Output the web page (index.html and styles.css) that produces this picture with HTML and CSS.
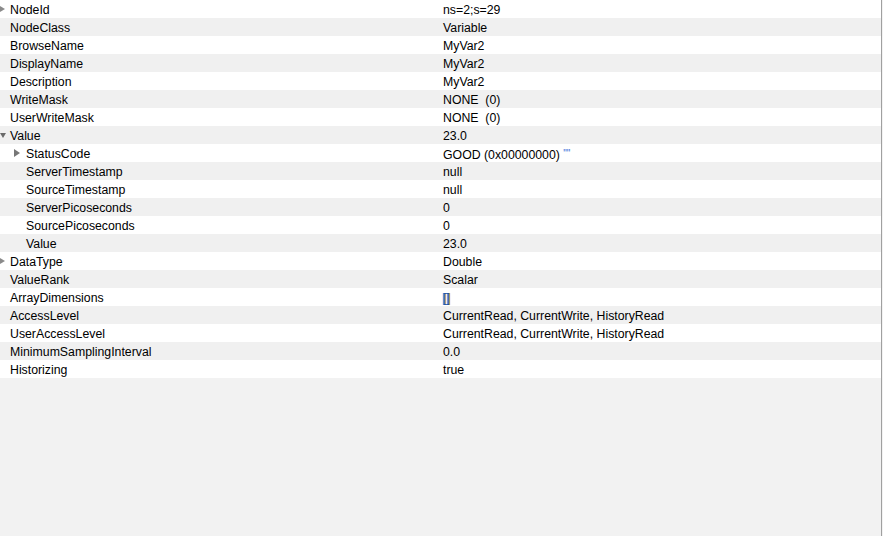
FILE: index.html
```html
<!DOCTYPE html>
<html>
<head>
    <title>Attributes</title>
    <link rel="stylesheet" href="styles.css">
</head>
<body>
    <div class="panel">
        <div class="attr-table">
            <div class="row"><div class="name"><span class="twisty closed"></span>NodeId</div><div class="val">ns=2;s=29</div></div>
            <div class="row"><div class="name">NodeClass</div><div class="val">Variable</div></div>
            <div class="row"><div class="name">BrowseName</div><div class="val">MyVar2</div></div>
            <div class="row"><div class="name">DisplayName</div><div class="val">MyVar2</div></div>
            <div class="row"><div class="name">Description</div><div class="val">MyVar2</div></div>
            <div class="row"><div class="name">WriteMask</div><div class="val">NONE&nbsp; (0)</div></div>
            <div class="row"><div class="name">UserWriteMask</div><div class="val">NONE&nbsp; (0)</div></div>
            <div class="row"><div class="name"><span class="twisty open"></span>Value</div><div class="val">23.0</div></div>
            <div class="row child"><div class="name"><span class="twisty closed dark"></span>StatusCode</div><div class="val">GOOD (0x00000000) <span class="quote">""</span></div></div>
            <div class="row child"><div class="name">ServerTimestamp</div><div class="val">null</div></div>
            <div class="row child"><div class="name">SourceTimestamp</div><div class="val">null</div></div>
            <div class="row child"><div class="name">ServerPicoseconds</div><div class="val">0</div></div>
            <div class="row child"><div class="name">SourcePicoseconds</div><div class="val">0</div></div>
            <div class="row child"><div class="name">Value</div><div class="val">23.0</div></div>
            <div class="row"><div class="name"><span class="twisty closed"></span>DataType</div><div class="val">Double</div></div>
            <div class="row"><div class="name">ValueRank</div><div class="val">Scalar</div></div>
            <div class="row"><div class="name">ArrayDimensions</div><div class="val"><span class="brackets">[]</span></div></div>
            <div class="row"><div class="name">AccessLevel</div><div class="val">CurrentRead, CurrentWrite, HistoryRead</div></div>
            <div class="row"><div class="name">UserAccessLevel</div><div class="val">CurrentRead, CurrentWrite, HistoryRead</div></div>
            <div class="row"><div class="name">MinimumSamplingInterval</div><div class="val">0.0</div></div>
            <div class="row"><div class="name">Historizing</div><div class="val">true</div></div>
        </div>
        <div class="edge"></div>
    </div>
</body>
</html>
```

FILE: styles.css
```css
body {
    margin: 0;
    background: #f2f2f2;
    font-family: "Liberation Sans", Arial, sans-serif;
    font-size: 12.3px;
    color: #000;
}
.panel {
    display: flex;
    height: 536px;
}
.attr-table {
    width: 881px;
}
.edge {
    width: 1px;
    background: #a0a0a0;
}
.row {
    display: grid;
    grid-template-columns: 443px 1fr;
    height: 18px;
    line-height: 18px;
    background: #fff;
    overflow: hidden;
}
.row:nth-child(even) {
    background: #f0f0f0;
}
.name,
.val {
    padding-top: 1px;
    white-space: nowrap;
}
.name {
    position: relative;
    padding-left: 10px;
}
.child .name {
    padding-left: 26px;
}
.twisty {
    position: absolute;
    top: 6px;
    left: 0;
    width: 0;
    height: 0;
}
.twisty.closed {
    border-top: 3px solid transparent;
    border-bottom: 3px solid transparent;
    border-left: 5px solid #8a8a8a;
}
.twisty.open {
    top: 7px;
    border-left: 3px solid transparent;
    border-right: 3px solid transparent;
    border-top: 5px solid #6a6a6a;
}
.twisty.dark {
    left: 14px;
    top: 5px;
    border-top-width: 4px;
    border-bottom-width: 4px;
    border-left: 6px solid #777;
}
.quote {
    color: #3a6fd8;
    font-size: 10px;
    vertical-align: 2px;
}
.brackets {
    color: #1f4fa8;
    text-shadow: -1px 0 #3d8fe0, 1px 0 #e0a040;
}
```
